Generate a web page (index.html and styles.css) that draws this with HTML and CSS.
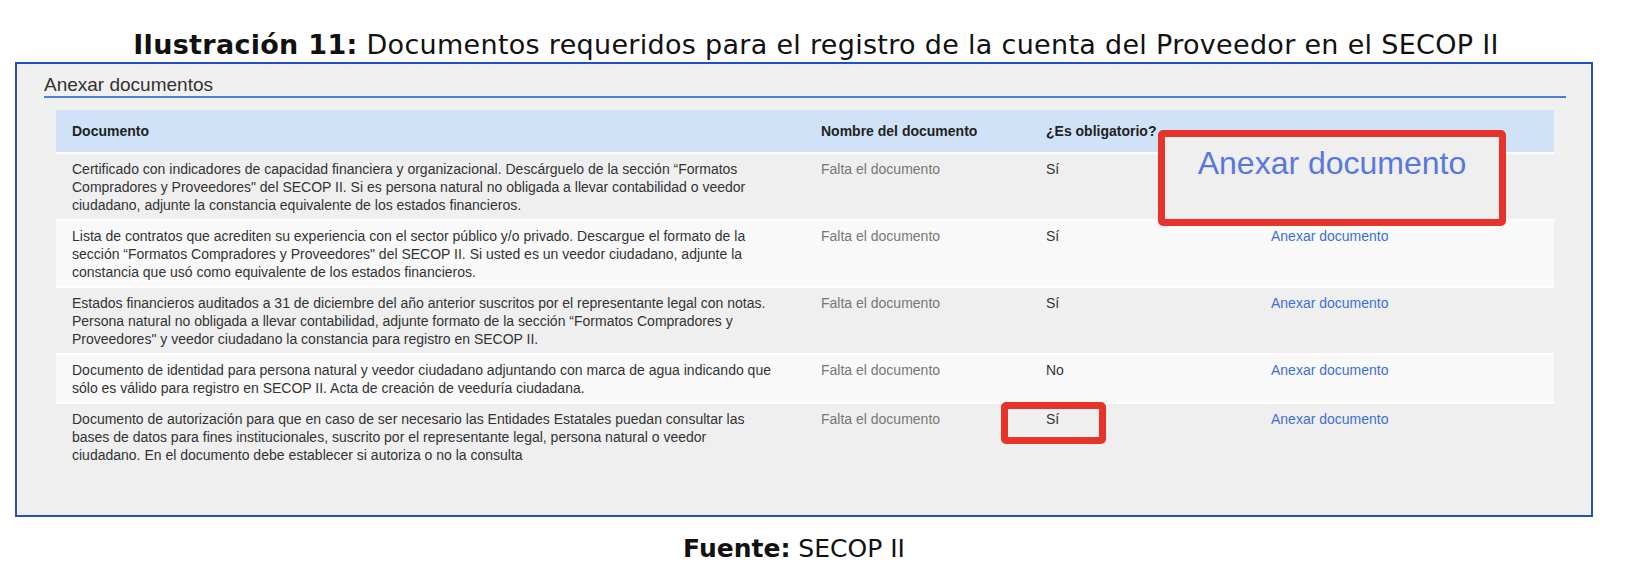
FILE: index.html
```html
<!DOCTYPE html>
<html lang="es">
<head>
    <meta charset="UTF-8">
    <meta name="viewport" content="width=device-width, initial-scale=1.0">
    <title>Ilustración 11 - Anexar documentos</title>
    <link rel="stylesheet" href="styles.css">
</head>
<body>
    <p class="caption"><b>Ilustración 11:</b> Documentos requeridos para el registro de la cuenta del Proveedor en el SECOP II</p>

    <div class="panel">
        <h2 class="panel-title">Anexar documentos</h2>

        <!-- tabla de documentos -->
        <table class="docs">
            <colgroup>
                <col class="col-doc">
                <col class="col-name">
                <col class="col-req">
                <col>
            </colgroup>
            <thead>
                <tr>
                    <th>Documento</th>
                    <th>Nombre del documento</th>
                    <th>¿Es obligatorio?</th>
                    <th></th>
                </tr>
            </thead>
            <tbody>
                <tr>
                    <td>Certificado con indicadores de capacidad financiera y organizacional. Descárguelo de la sección “Formatos<br>Compradores y Proveedores" del SECOP II. Si es persona natural no obligada a llevar contabilidad o veedor<br>ciudadano, adjunte la constancia equivalente de los estados financieros.</td>
                    <td class="missing">Falta el documento</td>
                    <td>Sí</td>
                    <td></td>
                </tr>
                <tr>
                    <td>Lista de contratos que acrediten su experiencia con el sector público y/o privado. Descargue el formato de la<br>sección “Formatos Compradores y Proveedores" del SECOP II. Si usted es un veedor ciudadano, adjunte la<br>constancia que usó como equivalente de los estados financieros.</td>
                    <td class="missing">Falta el documento</td>
                    <td>Sí</td>
                    <td><a class="link" href="#">Anexar documento</a></td>
                </tr>
                <tr>
                    <td>Estados financieros auditados a 31 de diciembre del año anterior suscritos por el representante legal con notas.<br>Persona natural no obligada a llevar contabilidad, adjunte formato de la sección “Formatos Compradores y<br>Proveedores" y veedor ciudadano la constancia para registro en SECOP II.</td>
                    <td class="missing">Falta el documento</td>
                    <td>Sí</td>
                    <td><a class="link" href="#">Anexar documento</a></td>
                </tr>
                <tr>
                    <td>Documento de identidad para persona natural y veedor ciudadano adjuntando con marca de agua indicando que<br>sólo es válido para registro en SECOP II. Acta de creación de veeduría ciudadana.</td>
                    <td class="missing">Falta el documento</td>
                    <td>No</td>
                    <td><a class="link" href="#">Anexar documento</a></td>
                </tr>
                <tr class="last">
                    <td>Documento de autorización para que en caso de ser necesario las Entidades Estatales puedan consultar las<br>bases de datos para fines institucionales, suscrito por el representante legal, persona natural o veedor<br>ciudadano. En el documento debe establecer si autoriza o no la consulta</td>
                    <td class="missing">Falta el documento</td>
                    <td>Sí</td>
                    <td><a class="link" href="#">Anexar documento</a></td>
                </tr>
            </tbody>
        </table>

        <!-- recuadros rojos de la ilustración -->
        <div class="callout callout-big">Anexar documento</div>
        <div class="callout callout-si"></div>
    </div>

    <p class="caption source"><b>Fuente:</b> SECOP II</p>
</body>
</html>
```

FILE: styles.css
```css
/* página */
body {
    margin: 0;
    background-color: #fff;
    font-family: "Liberation Sans", Arial, sans-serif;
}

/* títulos de la ilustración */
.caption {
    margin: 30px 0 0;
    text-align: center;
    font-family: "DejaVu Sans", sans-serif;
    font-size: 27px;
    letter-spacing: 0.3px;
    line-height: 30px;
    color: #111;
}

.source {
    margin-top: 17px;
    padding-right: 44px;
    font-size: 25px;
    letter-spacing: 0;
}

/* panel */
.panel {
    position: relative;
    margin: 2px 39px 0 15px;
    padding: 10px 25px 41px 27px;
    border: 2px solid #2450bd;
    background-color: #f0f0f0;
}

.panel-title {
    margin: 0;
    font-size: 19px;
    font-weight: normal;
    line-height: 22px;
    color: #333;
    border-bottom: 2px solid #4d7fd2;
}

/* tabla */
.docs {
    width: calc(100% - 24px);
    margin: 12px 12px 0;
    table-layout: fixed;
    border-collapse: separate;
    border-spacing: 0;
    font-size: 14px;
}

.col-doc {
    width: 749px;
}

.col-name,
.col-req {
    width: 225px;
}

.docs th {
    height: 42px;
    padding: 0 16px;
    background-color: #cfe2f7;
    text-align: left;
    font-weight: bold;
    color: #222;
    white-space: nowrap;
}

.docs td {
    padding: 6px 16px 5px;
    border-top: 2px solid #fff;
    line-height: 18px;
    color: #333;
    vertical-align: top;
    white-space: nowrap;
}

.docs tbody tr:nth-child(odd) td {
    background-color: #efefef;
}

.docs tbody tr:nth-child(even) td {
    background-color: #f9f9f9;
}

.docs tr.last td {
    padding-bottom: 10px;
}

.missing {
    color: #777 !important;
}

.link {
    color: #3d6fd6;
    text-decoration: none;
}

/* recuadros rojos */
.callout {
    position: absolute;
    box-sizing: border-box;
    border: 7px solid #e6342a;
    border-radius: 5px;
}

.callout-big {
    left: 1141px;
    top: 66px;
    width: 348px;
    height: 96px;
    padding-top: 8px;
    background-color: #efefef;
    text-align: center;
    font-size: 32px;
    line-height: 37px;
    color: #5878df;
}

.callout-si {
    left: 984px;
    top: 338px;
    width: 105px;
    height: 42px;
}
```
